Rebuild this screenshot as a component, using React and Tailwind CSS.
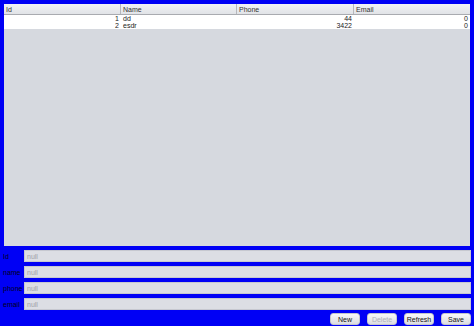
export default function App() {
  const rows = [
    { id: 1, name: "dd", phone: "44", email: "0" },
    { id: 2, name: "esdr", phone: "3422", email: "0" },
  ];
  const fields = ["Id", "name", "phone", "email"];
  const font = { fontFamily: '"Liberation Sans", Arial, sans-serif' };
  return (
    <div className="w-[474px] h-[326px] bg-[#0000f5] flex flex-col overflow-hidden text-[7px] leading-none" style={font}>
      <div className="ml-[4px] mr-[4px] mt-[4px] h-[242px] bg-[#d6d9df] flex flex-col">
        <div className="flex h-[11px] bg-gradient-to-b from-[#f2f3f5] to-[#e1e3e7] border-b border-[#a9abb0] text-[#333]">
          <div className="w-[117px] pl-[2px] flex items-center border-r border-[#b5b7bc]">Id</div>
          <div className="w-[116px] pl-[2px] flex items-center border-r border-[#b5b7bc]">Name</div>
          <div className="w-[117px] pl-[2px] flex items-center border-r border-[#b5b7bc]">Phone</div>
          <div className="flex-1 pl-[2px] flex items-center">Email</div>
        </div>
        {rows.map((r) => (
          <div key={r.id} className="flex h-[7px] bg-white text-[#222]">
            <div className="w-[117px] pr-[2px] flex items-center justify-end">{r.id}</div>
            <div className="w-[116px] pl-[2px] flex items-center">{r.name}</div>
            <div className="w-[117px] pr-[2px] flex items-center justify-end">{r.phone}</div>
            <div className="flex-1 pr-[2px] flex items-center justify-end">{r.email}</div>
          </div>
        ))}
      </div>
      <div className="mt-[4px] flex flex-col gap-[4px]">
        {fields.map((f) => (
          <div key={f} className="flex h-[12px] items-center">
            <div className="w-[24px] pl-[3px] text-[#000020]">{f}</div>
            <div className="w-[447px] h-[12px] bg-[#dcdee4] border border-[#c6c8d0] flex items-center pl-[2px] text-[#a0a2a8]">null</div>
          </div>
        ))}
      </div>
      <div className="mt-[3px] flex justify-end gap-[7px] pr-[3px]">
        {["New", "Delete", "Refresh", "Save"].map((b) => (
          <div
            key={b}
            className={`w-[30px] h-[12px] rounded-[3px] border border-[#c4c6cc] bg-gradient-to-b from-[#f8f8f9] to-[#dcdde1] flex items-center justify-center ${b === "Delete" ? "text-[#b0b2b8]" : "text-[#111]"}`}
          >
            {b}
          </div>
        ))}
      </div>
    </div>
  );
}
